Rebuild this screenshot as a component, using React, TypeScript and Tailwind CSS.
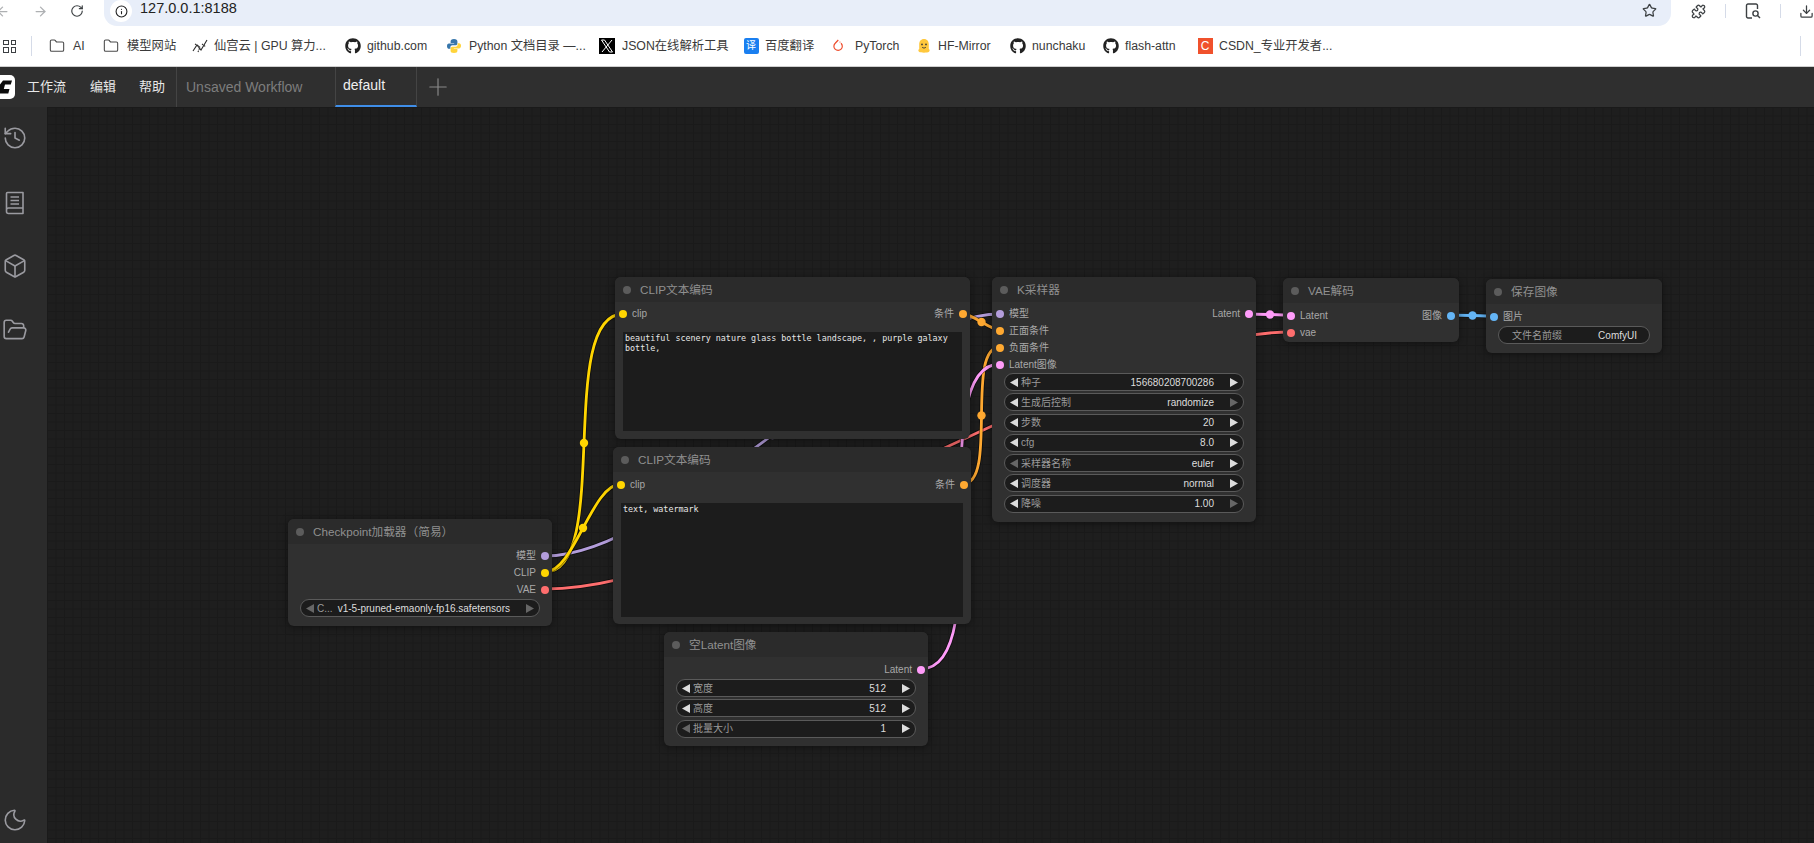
import { Box, FolderOpen, History, Moon, Plus, ArrowLeft, ArrowRight, RotateCw, Info, Star, Folder, Puzzle, Download } from 'lucide-react';
import { FaGithub } from 'react-icons/fa';
import type { ReactNode } from 'react';

const sans = 'font-["Liberation_Sans","Noto_Sans_CJK_SC",sans-serif]';

type Pt = [number, number];

// coordinates are page pixels, the svg is shifted by the canvas offset
const links: { color: string; from: Pt; to: Pt }[] = [
    { color: '#B39DDB', from: [545, 556], to: [1000, 314] },
    { color: '#FFD500', from: [545, 572], to: [623, 314] },
    { color: '#FFD500', from: [545, 572], to: [621, 484] },
    { color: '#FF6E6E', from: [545, 589], to: [1291, 332] },
    { color: '#FFA931', from: [963, 314], to: [1000, 330] },
    { color: '#FFA931', from: [963, 484], to: [1000, 347] },
    { color: '#FF9CF9', from: [921, 669], to: [1000, 364] },
    { color: '#FF9CF9', from: [1249, 314], to: [1291, 315] },
    { color: '#64B5F6', from: [1451, 315], to: [1494, 316] },
];

function Links() {
    return (
        <svg className="absolute left-0 top-0 w-full h-full" viewBox="47 107 1767 736" fill="none">
            {links.map((l, i) => {
                const [ax, ay] = l.from;
                const [bx, by] = l.to;
                const d = Math.hypot(bx - ax, by - ay) * 0.25;
                const path = `M${ax} ${ay} C${ax + d} ${ay} ${bx - d} ${by} ${bx} ${by}`;
                return (
                    <g key={i}>
                        <path d={path} stroke="#000" strokeOpacity={0.5} strokeWidth={4.5} />
                        <path d={path} stroke={l.color} strokeWidth={2.8} />
                        <circle cx={(ax + bx) / 2} cy={(ay + by) / 2} r={4.2} fill={l.color} />
                    </g>
                );
            })}
        </svg>
    );
}

function Dot({ color }: { color: string }) {
    return <span className={`w-[8px] h-[8px] rounded-full shrink-0 ${color}`} />;
}

function NodeCard({ title, className, children }: { title: string; className: string; children: ReactNode }) {
    return (
        <div className={`absolute rounded-[6px] bg-[#303030] shadow-[0_1px_8px_rgba(0,0,0,0.45)] flex flex-col ${className}`}>
            <div className="h-[25px] shrink-0 rounded-t-[6px] bg-[#2b2b2b] flex items-center pl-[8px] gap-[9px] text-[11.7px] text-[#909090]">
                <span className="w-[8px] h-[8px] rounded-full bg-[#5c5c5c]" />
                <span>{title}</span>
            </div>
            {children}
        </div>
    );
}

function Slot({ label, color, side = 'in' }: { label: string; color: string; side?: 'in' | 'out' }) {
    return (
        <div className={`h-[17px] flex items-center text-[10px] text-[#a8a8a8] gap-[5px] ${side === 'out' ? 'flex-row-reverse' : ''}`}>
            <Dot color={color} />
            <span>{label}</span>
        </div>
    );
}

function Arrow({ dir, on }: { dir: 'left' | 'right'; on: boolean }) {
    return (
        <svg width="8" height="9" viewBox="0 0 8 9" className="shrink-0">
            <polygon points={dir === 'left' ? '8,0 8,9 0,4.5' : '0,0 0,9 8,4.5'} fill={on ? '#dddddd' : '#666666'} />
        </svg>
    );
}

function Widget({ label, value, left = true, right = true }: { label: string; value: string; left?: boolean; right?: boolean }) {
    return (
        <div className="h-[18px] rounded-full border border-[#5a5a5a] bg-[#1c1c1c] flex items-center px-[5px] text-[10px]">
            <Arrow dir="left" on={left} />
            <span className="ml-[3px] text-[#9a9a9a]">{label}</span>
            <span className="ml-auto mr-[16px] text-[#dddddd]">{value}</span>
            <Arrow dir="right" on={right} />
        </div>
    );
}

function PromptBox({ text, className }: { text: string; className: string }) {
    return (
        <div className={`mx-[8px] bg-[#1c1c1c] px-[2px] pt-[1px] font-['DejaVu_Sans_Mono',monospace] text-[8.4px] leading-[10px] text-[#e6e6e6] ${className}`}>
            {text}
        </div>
    );
}

function BookIcon() {
    return (
        <svg width="26" height="26" viewBox="0 0 26 26" fill="none" stroke="#9a9aa0" strokeWidth="1.6" strokeLinejoin="round">
            <path d="M4.5 21V4.5a1 1 0 0 1 1-1h15.5v21H6.5a2 2 0 0 1-2-2V21a2 2 0 0 1 2-2H21" />
            <path d="M8.5 8h8.5M8.5 11.5h8.5M8.5 15h8.5" />
        </svg>
    );
}

function ComfyLogo() {
    return (
        <svg width="15" height="24" viewBox="0 0 15 24" className="shrink-0">
            <path d="M0 0H10a5 5 0 0 1 5 5V19a5 5 0 0 1-5 5H0Z" fill="#ffffff" />
            <path d="M3 5.5H12L10.8 9.5H5L3.8 14H9.5L8.3 18.5H0V9.5Z" fill="#0c0c0c" />
        </svg>
    );
}

function PythonIcon() {
    return (
        <svg width="16" height="16" viewBox="0 0 16 16">
            <path d="M8 1C5.5 1 4.6 2 4.6 3.3V5H8.2V5.6H3C1.6 5.6 1 6.8 1 8.2S1.7 10.8 3 10.8H4.4V9.2C4.4 8 5.3 7.3 6.4 7.3H9.6C10.6 7.3 11.4 6.5 11.4 5.5V3.3C11.4 2 10.4 1 8 1Z" fill="#3776ab" />
            <path d="M8 15C10.5 15 11.4 14 11.4 12.7V11H7.8V10.4H13C14.4 10.4 15 9.2 15 7.8S14.3 5.2 13 5.2H11.6V6.8C11.6 8 10.7 8.7 9.6 8.7H6.4C5.4 8.7 4.6 9.5 4.6 10.5V12.7C4.6 14 5.6 15 8 15Z" fill="#ffd43b" />
        </svg>
    );
}

function ScribbleIcon() {
    return (
        <svg width="16" height="16" viewBox="0 0 16 16" fill="none" stroke="#2a2a2a" strokeWidth="1.1">
            <path d="M1 13L5 7L9 12L15 2" />
            <path d="M3 6L8 9M10 6L14 9M6 14L8 9" strokeDasharray="1.5 1" />
        </svg>
    );
}

function XIcon() {
    return (
        <svg width="16" height="16" viewBox="0 0 16 16">
            <rect width="16" height="16" fill="#000000" />
            <path d="M2.5 2H5.5L13.5 14H10.5Z" fill="none" stroke="#ffffff" strokeWidth="1" />
            <path d="M13 2L3 14" stroke="#ffffff" strokeWidth="1" />
        </svg>
    );
}

function TorchIcon() {
    return (
        <svg width="16" height="16" viewBox="0 0 16 16" fill="none" stroke="#ee4c2c" strokeWidth="1.2">
            <path d="M8.3 2L5.2 5.2A4.2 4.2 0 1 0 11 5.2" />
            <circle cx="10" cy="4" r="0.6" fill="#ee4c2c" stroke="none" />
        </svg>
    );
}

function HuggingIcon() {
    return (
        <svg width="16" height="16" viewBox="0 0 16 16">
            <path d="M8 1C4.8 1 3.2 3.4 3.2 6.4V11C2.2 11.6 2 13 3 13.8C4.6 15 11.4 15 13 13.8C14 13 13.8 11.6 12.8 11V6.4C12.8 3.4 11.2 1 8 1Z" fill="#ffc83d" />
            <circle cx="6" cy="6.4" r="0.9" fill="#3a3a3a" />
            <circle cx="10" cy="6.4" r="0.9" fill="#3a3a3a" />
            <path d="M6 9C6.8 10.4 9.2 10.4 10 9" stroke="#3a3a3a" strokeWidth="0.9" fill="none" />
        </svg>
    );
}

function PageSearchIcon() {
    return (
        <svg width="16" height="17" viewBox="0 0 16 17" fill="none" stroke="#3c4043" strokeWidth="1.4" className="shrink-0">
            <path d="M7 15H3a1.5 1.5 0 0 1-1.5-1.5v-11A1.5 1.5 0 0 1 3 1h8a1.5 1.5 0 0 1 1.5 1.5V6" />
            <circle cx="10.5" cy="10.5" r="2.6" />
            <path d="M12.5 12.5L15 15" />
        </svg>
    );
}

const bookmarks: { w: string; gap: string; icon: ReactNode; label: string }[] = [
    { w: 'w-[54px]', gap: 'gap-[8px]', icon: <Folder size={16} strokeWidth={1.6} className="text-[#4a4a4a]" />, label: 'AI' },
    { w: 'w-[89px]', gap: 'gap-[8px]', icon: <Folder size={16} strokeWidth={1.6} className="text-[#4a4a4a]" />, label: '模型网站' },
    { w: 'w-[153px]', gap: 'gap-[6px]', icon: <ScribbleIcon />, label: '仙宫云 | GPU 算力...' },
    { w: 'w-[101px]', gap: 'gap-[6px]', icon: <FaGithub size={16} className="text-[#222222]" />, label: 'github.com' },
    { w: 'w-[153px]', gap: 'gap-[7px]', icon: <PythonIcon />, label: 'Python 文档目录 —...' },
    { w: 'w-[144px]', gap: 'gap-[7px]', icon: <XIcon />, label: 'JSON在线解析工具' },
    { w: 'w-[87px]', gap: 'gap-[6px]', icon: <span className="w-[15px] h-[16px] rounded-[2px] bg-[#1a7ff0] text-white text-[10px] leading-[16px] text-center">译</span>, label: '百度翻译' },
    { w: 'w-[86px]', gap: 'gap-[9px]', icon: <TorchIcon />, label: 'PyTorch' },
    { w: 'w-[94px]', gap: 'gap-[6px]', icon: <HuggingIcon />, label: 'HF-Mirror' },
    { w: 'w-[93px]', gap: 'gap-[6px]', icon: <FaGithub size={16} className="text-[#222222]" />, label: 'nunchaku' },
    { w: 'w-[94px]', gap: 'gap-[6px]', icon: <FaGithub size={16} className="text-[#222222]" />, label: 'flash-attn' },
    { w: 'w-[140px]', gap: 'gap-[6px]', icon: <span className="w-[15px] h-[16px] bg-[#f0512c] text-white text-[12px] leading-[16px] text-center">C</span>, label: 'CSDN_专业开发者...' },
];

export default function App() {
    return (
        <div className={`w-[1814px] h-[843px] overflow-hidden flex flex-col bg-white ${sans}`}>
            {/* Chrome toolbar */}
            <div className="h-[26px] shrink-0 flex items-start relative">
                <div className="w-[104px] shrink-0 h-[22px] flex items-center text-[#5f6368]">
                    <ArrowLeft size={15} className="ml-[-5px] opacity-50" />
                    <ArrowRight size={15} className="ml-[23px] opacity-50" />
                    <RotateCw size={14} className="ml-[22px] text-[#3c4043]" />
                </div>
                <div className="w-[1569px] h-[26px] rounded-b-[13px] rounded-tr-none bg-[#e8eef9] flex items-center pl-[6px]">
                    <span className="w-[22px] h-[22px] rounded-full bg-white flex items-center justify-center mt-[-4px]">
                        <Info size={13} className="text-[#222222]" />
                    </span>
                    <span className="ml-[8px] mt-[-8px] text-[14.5px] text-[#222222]">127.0.0.1:8188</span>
                    <Star size={15} className="ml-auto mr-[14px] mt-[-6px] text-[#3c4043]" />
                </div>
                <div className="flex-1 h-[22px] flex items-center pl-[20px] text-[#3c4043]">
                    <Puzzle size={15} className="shrink-0" />
                    <span className="ml-[19px] w-px h-[14px] bg-[#d5dbe8] shrink-0" />
                    <span className="ml-[19px]"><PageSearchIcon /></span>
                    <span className="ml-[19px] w-px h-[14px] bg-[#d5dbe8] shrink-0" />
                    <Download size={15} className="ml-[18px] shrink-0" />
                </div>
            </div>

            {/* Bookmarks */}
            <div className="h-[40px] shrink-0 flex items-center pl-[3px] text-[12.3px] text-[#3a3a3a]">
                <span className="w-[13px] h-[13px] grid grid-cols-2 gap-[2px] shrink-0">
                    <i className="border border-[#3c4043]" />
                    <i className="border border-[#3c4043]" />
                    <i className="border border-[#3c4043]" />
                    <i className="border border-[#3c4043]" />
                </span>
                <span className="ml-[15px] mr-[17px] w-px h-[20px] bg-[#d5dbe8]" />
                {bookmarks.map(b => (
                    <div key={b.label} className={`${b.w} ${b.gap} shrink-0 flex items-center whitespace-nowrap`}>
                        <span className="w-[16px] h-[16px] shrink-0 flex items-center justify-center">{b.icon}</span>
                        <span>{b.label}</span>
                    </div>
                ))}
                <span className="ml-auto mr-[13px] w-px h-[20px] bg-[#d5dbe8]" />
            </div>

            {/* ComfyUI menu */}
            <div className="h-[41px] shrink-0 flex bg-[#2f2f2f] border-t border-[#cfcfcf] text-[13px] text-[#e8e8e8]">
                <div className="w-[177px] shrink-0 flex items-center border-r border-[#444444]">
                    <ComfyLogo />
                    <span className="ml-[12px]">工作流</span>
                    <span className="ml-[24px]">编辑</span>
                    <span className="ml-[23px]">帮助</span>
                </div>
                <div className="w-[158px] shrink-0 flex items-center pl-[9px] text-[14px] text-[#7d7d7d]">Unsaved Workflow</div>
                <div className="w-[82px] shrink-0 pl-[7px] pt-[8px] text-[14px] text-[#f0f0f0] border-x border-[#444444] border-b-2 border-b-[#3f8ee8]">default</div>
                <div className="w-[42px] flex items-center justify-center">
                    <Plus size={28} strokeWidth={1} className="text-[#8a8a8a]" />
                </div>
            </div>

            <div className="flex-1 flex min-h-0">
                {/* Side toolbar */}
                <div className="w-[47px] shrink-0 bg-[#2b2b2b] flex flex-col items-center text-[#9a9aa0] pr-[17px] pt-[18px]">
                    <span className="shrink-0"><History size={26} strokeWidth={1.5} /></span>
                    <span className="mt-[38px] shrink-0"><BookIcon /></span>
                    <Box size={26} strokeWidth={1.5} className="mt-[38px] shrink-0" />
                    <FolderOpen size={26} strokeWidth={1.5} className="mt-[38px] shrink-0" />
                    <Moon size={26} strokeWidth={1.5} className="mt-auto mb-[10px] shrink-0" />
                </div>

                {/* Graph canvas */}
                <div className="flex-1 relative overflow-hidden bg-[#1e1e1e] bg-[linear-gradient(#1a1a1a_1px,transparent_1px),linear-gradient(90deg,#1a1a1a_1px,transparent_1px)] bg-[size:8.5px_8.5px]">
                    <Links />

                    <NodeCard title="Checkpoint加载器（简易）" className="left-[241px] top-[412px] w-[264px] h-[107px]">
                        <div className="pt-[3px] pr-[3px] flex flex-col">
                            <Slot label="模型" color="bg-[#B39DDB]" side="out" />
                            <Slot label="CLIP" color="bg-[#FFD500]" side="out" />
                            <Slot label="VAE" color="bg-[#FF6E6E]" side="out" />
                        </div>
                        <div className="mx-[12px] mt-[1px]">
                            <Widget label="C..." value="v1-5-pruned-emaonly-fp16.safetensors" left={false} right={false} />
                        </div>
                    </NodeCard>

                    <NodeCard title="CLIP文本编码" className="left-[568px] top-[170px] w-[355px] h-[162px]">
                        <div className="pl-[4px] pr-[3px] h-[30px] pt-[3px] flex justify-between">
                            <Slot label="clip" color="bg-[#FFD500]" />
                            <Slot label="条件" color="bg-[#FFA931]" side="out" />
                        </div>
                        <PromptBox text="beautiful scenery nature glass bottle landscape, , purple galaxy bottle," className="h-[99px]" />
                    </NodeCard>

                    <NodeCard title="CLIP文本编码" className="left-[566px] top-[340px] w-[358px] h-[177px]">
                        <div className="pl-[4px] pr-[3px] h-[31px] pt-[4px] flex justify-between">
                            <Slot label="clip" color="bg-[#FFD500]" />
                            <Slot label="条件" color="bg-[#FFA931]" side="out" />
                        </div>
                        <PromptBox text="text, watermark" className="h-[114px]" />
                    </NodeCard>

                    <NodeCard title="K采样器" className="left-[945px] top-[170px] w-[264px] h-[245px]">
                        <div className="flex justify-between pl-[4px] pr-[3px] pt-[3px]">
                            <div className="flex flex-col">
                                <Slot label="模型" color="bg-[#B39DDB]" />
                                <Slot label="正面条件" color="bg-[#FFA931]" />
                                <Slot label="负面条件" color="bg-[#FFA931]" />
                                <Slot label="Latent图像" color="bg-[#FF9CF9]" />
                            </div>
                            <Slot label="Latent" color="bg-[#FF9CF9]" side="out" />
                        </div>
                        <div className="mx-[12px] flex flex-col gap-[2.3px]">
                            <Widget label="种子" value="156680208700286" />
                            <Widget label="生成后控制" value="randomize" right={false} />
                            <Widget label="步数" value="20" />
                            <Widget label="cfg" value="8.0" />
                            <Widget label="采样器名称" value="euler" left={false} />
                            <Widget label="调度器" value="normal" />
                            <Widget label="降噪" value="1.00" right={false} />
                        </div>
                    </NodeCard>

                    <NodeCard title="VAE解码" className="left-[1236px] top-[171px] w-[176px] h-[64px]">
                        <div className="flex justify-between pl-[4px] pr-[4px] pt-[4px]">
                            <div className="flex flex-col">
                                <Slot label="Latent" color="bg-[#FF9CF9]" />
                                <Slot label="vae" color="bg-[#FF6E6E]" />
                            </div>
                            <Slot label="图像" color="bg-[#64B5F6]" side="out" />
                        </div>
                    </NodeCard>

                    <NodeCard title="保存图像" className="left-[1439px] top-[172px] w-[176px] h-[74px]">
                        <div className="pl-[4px] pt-[4px]">
                            <Slot label="图片" color="bg-[#64B5F6]" />
                        </div>
                        <div className="mx-[12px] mt-[1px]">
                            <div className="h-[18px] rounded-full border border-[#5a5a5a] bg-[#1c1c1c] flex items-center pl-[13px] pr-[12px] text-[10px]">
                                <span className="text-[#9a9a9a]">文件名前缀</span>
                                <span className="ml-auto text-[#dddddd]">ComfyUI</span>
                            </div>
                        </div>
                    </NodeCard>

                    <NodeCard title="空Latent图像" className="left-[617px] top-[525px] w-[264px] h-[114px]">
                        <div className="pr-[3px] pt-[4px]">
                            <Slot label="Latent" color="bg-[#FF9CF9]" side="out" />
                        </div>
                        <div className="mx-[12px] mt-[1px] flex flex-col gap-[2.3px]">
                            <Widget label="宽度" value="512" />
                            <Widget label="高度" value="512" />
                            <Widget label="批量大小" value="1" left={false} />
                        </div>
                    </NodeCard>

                    <div className="absolute left-[15px] top-[733px] text-[11px] font-bold text-[#aaaaaa]">T: 0.00s</div>
                </div>
            </div>
        </div>
    );
}
